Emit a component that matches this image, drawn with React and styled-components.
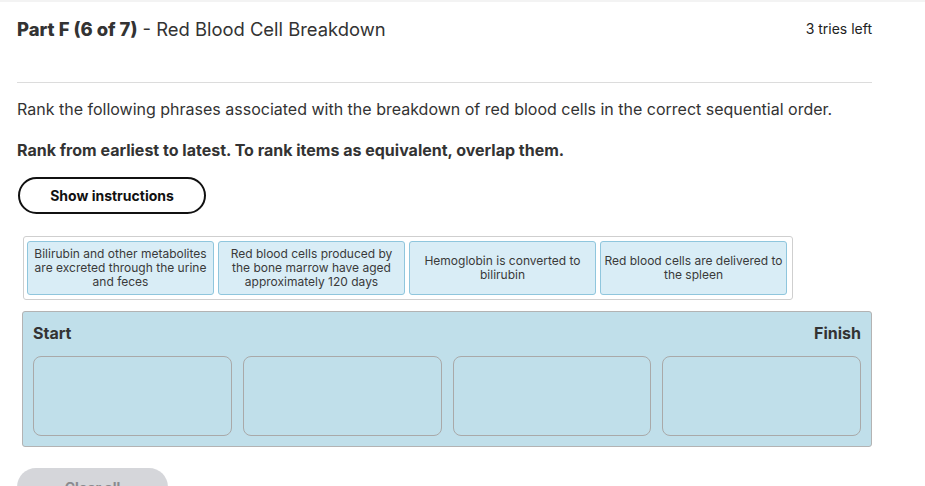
import React from "react";
import styled, { createGlobalStyle } from "styled-components";

const Global = createGlobalStyle`
  html, body { margin: 0; padding: 0; background: #fff; }
  body { font-family: Inter, "Noto Sans", Arial, sans-serif; color: #333; }
  * { box-sizing: border-box; }
`;

const TopBand = styled.div`
  height: 2px;
  background: #f3f3f3;
`;

const Page = styled.div`
  width: 872px;
  padding-left: 17px;
`;

const Header = styled.div`
  display: flex;
  justify-content: space-between;
  align-items: flex-start;
  height: 81px;
  padding-top: 16px;
  border-bottom: 1px solid #dcdcdc;
`;

const Title = styled.h2`
  margin: 0;
  font-size: 18.4px;
  line-height: 22px;
  font-weight: 400;
  color: #333;
`;

const PartLabel = styled.span`
  font-weight: 800;
`;

const Tries = styled.span`
  font-size: 14px;
  line-height: 22px;
  color: #222;
`;

const Prompt = styled.p`
  margin: 14px 0 0;
  font-size: 16px;
  line-height: 24px;
  font-weight: ${(p) => (p.$bold ? 700 : 400)};
  color: #333;
  & + & { margin-top: 17px; }
`;

const OutlineButton = styled.button`
  display: block;
  margin: 15px 0 0 1px;
  width: 188px;
  height: 37px;
  border: 2px solid #111;
  border-radius: 19px;
  background: #fff;
  font-family: inherit;
  font-size: 14px;
  font-weight: 700;
  color: #111;
  padding: 0;
`;

const Bank = styled.div`
  display: flex;
  gap: 4px;
  width: 770px;
  margin: 22px 0 0 6px;
  padding: 4px 4px 4px 3px;
  border: 1px solid #cfcfcf;
  border-radius: 3px;
`;

const Item = styled.div`
  width: 187px;
  height: 54px;
  display: flex;
  align-items: center;
  justify-content: center;
  text-align: center;
  padding: 0 3px;
  background: #d9edf6;
  border: 1px solid #8fc6dd;
  border-radius: 3px;
  font-size: 12px;
  line-height: 14px;
  color: #3a3a3a;
`;

const Zone = styled.div`
  width: 850px;
  margin: 11px 0 0 5px;
  padding: 10px 10px 10px;
  background: #c0dfea;
  border: 1px solid #b3b3b3;
  border-radius: 3px;
`;

const ZoneLabels = styled.div`
  display: flex;
  justify-content: space-between;
  font-size: 16px;
  line-height: 22px;
  font-weight: 700;
  color: #333;
`;

const Slots = styled.div`
  display: flex;
  gap: 11px;
  margin-top: 12px;
`;

const Slot = styled.div`
  flex: 1;
  height: 80px;
  border: 1px solid #a9a9a9;
  border-radius: 8px;
`;

const GrayButton = styled.button`
  display: block;
  margin: 21px 0 0;
  width: 151px;
  height: 38px;
  border: none;
  border-radius: 19px;
  background: #d5d6da;
  font-family: inherit;
  font-size: 14px;
  font-weight: 700;
  color: #8a8a8e;
  padding: 0;
`;

const items = [
  "Bilirubin and other metabolites are excreted through the urine and feces",
  "Red blood cells produced by the bone marrow have aged approximately 120 days",
  "Hemoglobin is converted to bilirubin",
  "Red blood cells are delivered to the spleen",
];

export default function App() {
  return (
    <>
      <Global />
      <TopBand />
      <Page>
        <Header>
          <Title>
            <PartLabel>Part F (6 of 7)</PartLabel> - Red Blood Cell Breakdown
          </Title>
          <Tries>3 tries left</Tries>
        </Header>
        <Prompt>
          Rank the following phrases associated with the breakdown of red blood cells in the correct sequential order.
        </Prompt>
        <Prompt $bold>Rank from earliest to latest. To rank items as equivalent, overlap them.</Prompt>
        <OutlineButton>Show instructions</OutlineButton>
        <Bank>
          {items.map((t) => (
            <Item key={t}>{t}</Item>
          ))}
        </Bank>
        <Zone>
          <ZoneLabels>
            <span>Start</span>
            <span>Finish</span>
          </ZoneLabels>
          <Slots>
            {[0, 1, 2, 3].map((i) => (
              <Slot key={i} />
            ))}
          </Slots>
        </Zone>
        <GrayButton>Clear all</GrayButton>
      </Page>
    </>
  );
}
